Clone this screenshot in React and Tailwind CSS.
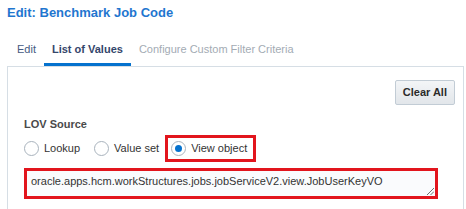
import React from "react";

const Tab = ({ label, active, disabled }) => (
    <div
        className={`px-[8px] pb-[7px] border-b-[3px] ${active
            ? "border-[#0572ce] font-bold text-[#34466b]"
            : disabled
                ? "border-transparent text-[#a3abb4]"
                : "border-transparent text-[#455a82]"
            }`}
    >
        {label}
    </div>
);

const Radio = ({ label, checked }) => (
    <div className="flex items-center gap-[5px]">
        <span className="flex h-[15px] w-[15px] items-center justify-center rounded-full border border-[#a9b3bd] bg-white">
            {checked && <span className="h-[7px] w-[7px] rounded-full bg-[#0572ce]"></span>}
        </span>
        <span className="text-[#333]">{label}</span>
    </div>
);

export default function App() {
    return (
        <div className="h-[209px] w-[466px] overflow-hidden bg-white pt-[5px] font-['Liberation_Sans',Arial,sans-serif] text-[11px] leading-[13px] text-[#333]">
            {/* Page title */}
            <h1 className="pl-[7px] text-[13px] font-bold leading-[15px] text-[#1f76cf]">
                Edit: Benchmark Job Code
            </h1>

            {/* Tabs */}
            <div className="mt-[23px] flex pl-[9px]">
                <Tab label="Edit" />
                <Tab label="List of Values" active />
                <Tab label="Configure Custom Filter Criteria" disabled />
            </div>

            {/* Panel */}
            <div className="ml-[7px] mr-[2px] h-[200px] border border-[#d6dee5] bg-white pl-[16px] pr-[8px]">
                <div className="mt-[13px] flex justify-end">
                    <button className="h-[25px] rounded-[2px] border border-[#c2ccd5] bg-gradient-to-b from-[#f3f5f7] to-[#e2e6ea] px-[7px] font-bold text-[#2b2b2b]">
                        Clear All
                    </button>
                </div>

                <div className="mt-[13px] font-bold text-[#4a4a4a]">LOV Source</div>

                <div className="mt-[4px] flex h-[27px] items-center">
                    <Radio label="Lookup" />
                    <div className="ml-[14px]">
                        <Radio label="Value set" />
                    </div>
                    <div className="ml-[6px] flex h-[27px] items-center border-[3px] border-[#e2151d] pl-[3px] pr-[6px]">
                        <Radio label="View object" checked />
                    </div>
                </div>

                {/* Highlighted text area */}
                <div className="mt-[6px] h-[31px] w-[414px] border-[3px] border-[#e2151d]">
                    <div className="relative h-full bg-[#fafbfd] pl-[4px] pt-[4px] text-[#333]">
                        oracle.apps.hcm.workStructures.jobs.jobServiceV2.view.JobUserKeyVO
                        <svg className="absolute bottom-[1px] right-[1px]" width="7" height="7" viewBox="0 0 7 7">
                            <line x1="7" y1="0" x2="0" y2="7" stroke="#6f6f6f" strokeWidth="1" />
                            <line x1="7" y1="3.5" x2="3.5" y2="7" stroke="#6f6f6f" strokeWidth="1" />
                        </svg>
                    </div>
                </div>
            </div>
        </div>
    );
}
